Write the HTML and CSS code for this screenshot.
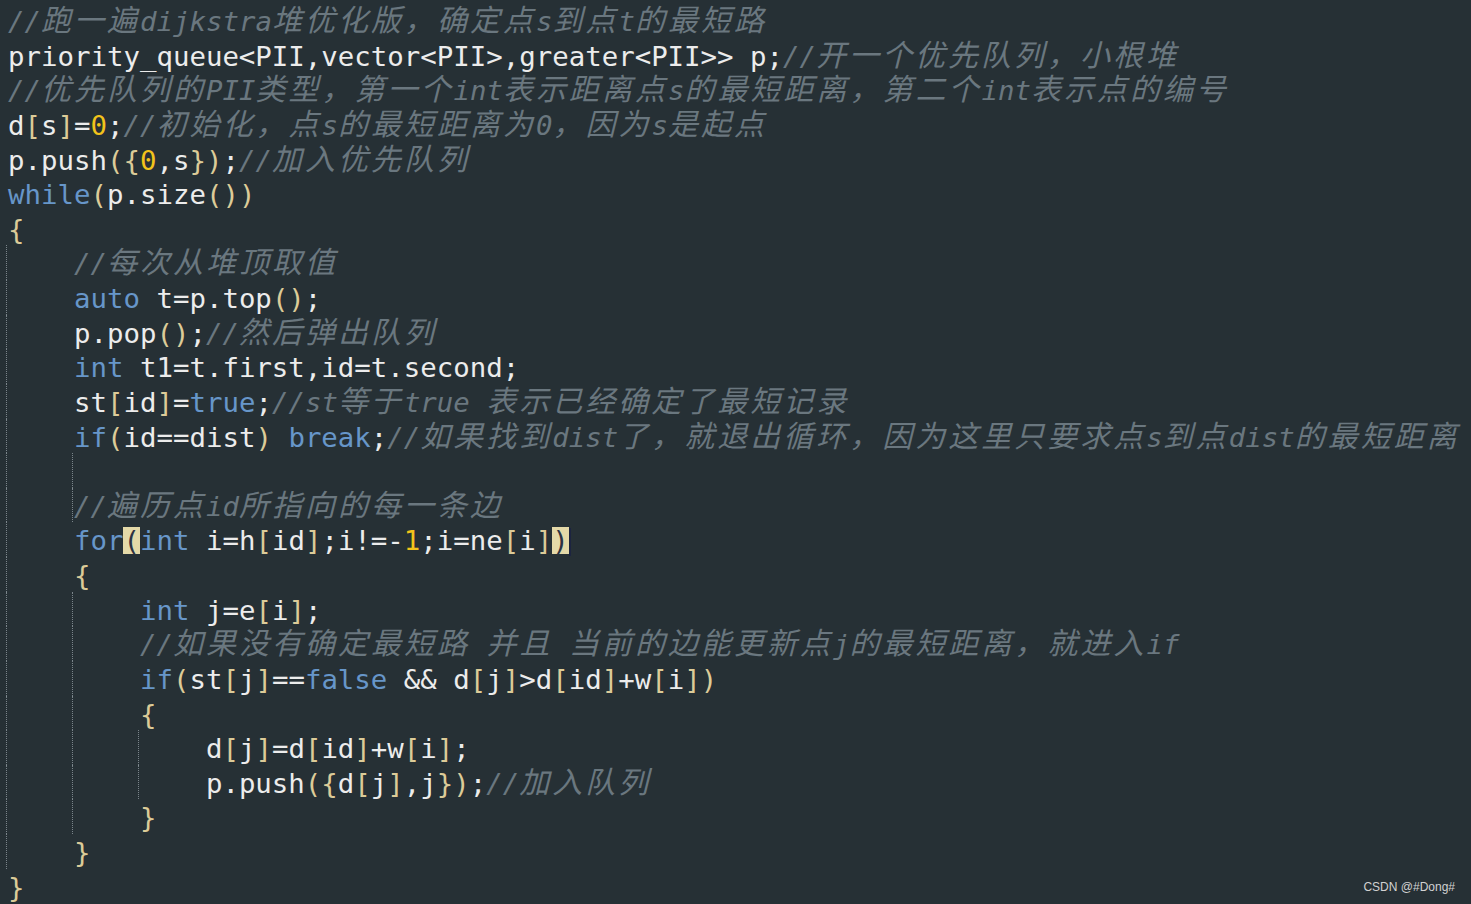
FILE: index.html
```html
<!DOCTYPE html>
<html lang="zh-CN">
<head>
<meta charset="utf-8">
<title>dijkstra</title>
<link rel="stylesheet" href="styles.css">
</head>
<body>
<div class="editor">
<div class="ln"><span class="c">//<span class="h">跑一遍</span>dijkstra<span class="h">堆优化版，确定点</span>s<span class="h">到点</span>t<span class="h">的最短路</span></span></div>
<div class="ln">priority_queue&lt;PII,vector&lt;PII&gt;,greater&lt;PII&gt;&gt; p;<span class="c">//<span class="h">开一个优先队列，小根堆</span></span></div>
<div class="ln"><span class="c">//<span class="h">优先队列的</span>PII<span class="h">类型，第一个</span>int<span class="h">表示距离点</span>s<span class="h">的最短距离，第二个</span>int<span class="h">表示点的编号</span></span></div>
<div class="ln">d<span class="b">[</span>s<span class="b">]</span>=<span class="n">0</span>;<span class="c">//<span class="h">初始化，点</span>s<span class="h">的最短距离为</span>0<span class="h">，因为</span>s<span class="h">是起点</span></span></div>
<div class="ln">p.push<span class="b">({</span><span class="n">0</span>,s<span class="b">})</span>;<span class="c">//<span class="h">加入优先队列</span></span></div>
<div class="ln"><span class="k">while</span><span class="b">(</span>p.size<span class="b">())</span></div>
<div class="ln"><span class="b">{</span></div>
<div class="ln"><i class="g"></i>    <span class="c">//<span class="h">每次从堆顶取值</span></span></div>
<div class="ln"><i class="g"></i>    <span class="k">auto</span> t=p.top<span class="b">()</span>;</div>
<div class="ln"><i class="g"></i>    p.pop<span class="b">()</span>;<span class="c">//<span class="h">然后弹出队列</span></span></div>
<div class="ln"><i class="g"></i>    <span class="k">int</span> t1=t.first,id=t.second;</div>
<div class="ln"><i class="g"></i>    st<span class="b">[</span>id<span class="b">]</span>=<span class="k">true</span>;<span class="c">//st<span class="h">等于</span>true <span class="h">表示已经确定了最短记录</span></span></div>
<div class="ln"><i class="g"></i>    <span class="k">if</span><span class="b">(</span>id==dist<span class="b">)</span> <span class="k">break</span>;<span class="c">//<span class="h">如果找到</span>dist<span class="h">了，就退出循环，因为这里只要求点</span>s<span class="h">到点</span>dist<span class="h">的最短距离</span></span></div>
<div class="ln"><i class="g"></i>    <i class="g"></i></div>
<div class="ln"><i class="g"></i>    <i class="g"></i><span class="c">//<span class="h">遍历点</span>id<span class="h">所指向的每一条边</span></span></div>
<div class="ln"><i class="g"></i>    <span class="k">for</span><span class="mh">(</span><span class="k">int</span> i=h<span class="b">[</span>id<span class="b">]</span>;i!=-<span class="n">1</span>;i=ne<span class="b">[</span>i<span class="b">]</span><span class="mh">)</span><i class="cur"></i></div>
<div class="ln"><i class="g"></i>    <span class="b">{</span></div>
<div class="ln"><i class="g"></i>    <i class="g"></i>    <span class="k">int</span> j=e<span class="b">[</span>i<span class="b">]</span>;</div>
<div class="ln"><i class="g"></i>    <i class="g"></i>    <span class="c">//<span class="h">如果没有确定最短路</span> <span class="h">并且</span> <span class="h">当前的边能更新点</span>j<span class="h">的最短距离，就进入</span>if</span></div>
<div class="ln"><i class="g"></i>    <i class="g"></i>    <span class="k">if</span><span class="b">(</span>st<span class="b">[</span>j<span class="b">]</span>==<span class="k">false</span> &amp;&amp; d<span class="b">[</span>j<span class="b">]</span>&gt;d<span class="b">[</span>id<span class="b">]</span>+w<span class="b">[</span>i<span class="b">])</span></div>
<div class="ln"><i class="g"></i>    <i class="g"></i>    <span class="b">{</span></div>
<div class="ln"><i class="g"></i>    <i class="g"></i>    <i class="g"></i>    d<span class="b">[</span>j<span class="b">]</span>=d<span class="b">[</span>id<span class="b">]</span>+w<span class="b">[</span>i<span class="b">]</span>;</div>
<div class="ln"><i class="g"></i>    <i class="g"></i>    <i class="g"></i>    p.push<span class="b">({</span>d<span class="b">[</span>j<span class="b">]</span>,j<span class="b">})</span>;<span class="c">//<span class="h">加入队列</span></span></div>
<div class="ln"><i class="g"></i>    <i class="g"></i>    <span class="b">}</span></div>
<div class="ln"><i class="g"></i>    <span class="b">}</span></div>
<div class="ln"><span class="b">}</span></div>
<div class="mark">CSDN @#Dong#</div>
</div>
</body>
</html>
```

FILE: styles.css
```css
html, body {
  margin: 0;
  padding: 0;
  background: #263035;
}

.editor {
  position: relative;
  height: 904px;
  box-sizing: border-box;
  overflow: hidden;
  padding: 3px 0 0 8px;
  font-family: "DejaVu Sans Mono", "Liberation Mono", monospace;
  font-size: 27.4px;
  color: #ececec;
  background: #263035;
}

.ln {
  height: 34.64px;
  line-height: 31.04px;
  white-space: pre;
}

/* invisible CJK strut so every row shares one baseline */
.ln::before {
  content: "\200B";
  font-family: "Noto Sans CJK SC", sans-serif;
  font-size: 30px;
}

.k { color: #6796c9; }
.b { color: #dccb98; }
.n { color: #f2c31b; }

.c {
  color: #6a777f;
  font-style: italic;
}

.h {
  font-family: "Noto Sans CJK SC", sans-serif;
  font-size: 30px;
  letter-spacing: 3px;
}

.g {
  display: inline-block;
  width: 0;
  height: 34.64px;
  vertical-align: top;
  border-left: 1px dotted #7b858b;
  margin-left: -2px;
  margin-right: 1px;
}

.mh {
  display: inline-block;
  height: 27px;
  line-height: 27px;
  background: #e4d9a8;
  color: #2c3242;
}

.cur {
  display: inline-block;
  width: 2px;
  height: 28px;
  vertical-align: -6px;
  margin-right: -2px;
  background: #1c2440;
}

.mark {
  position: absolute;
  right: 16px;
  bottom: 10px;
  font-family: "Liberation Sans", Arial, sans-serif;
  font-size: 12px;
  color: #d2d2d2;
}
```
